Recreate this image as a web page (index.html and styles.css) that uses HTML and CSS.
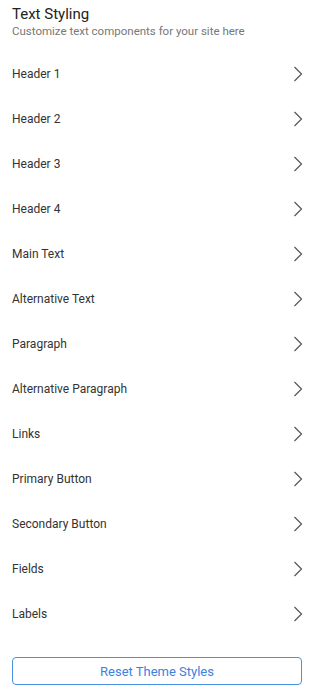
FILE: index.html
```html
<!DOCTYPE html>
<html lang="en">
<head>
    <meta charset="UTF-8">
    <meta name="viewport" content="width=device-width, initial-scale=1.0">
    <title>Text Styling</title>
    <link rel="stylesheet" href="styles.css">
</head>
<body>
    <div class="panel">
        <div class="panel-head">
            <h1>Text Styling</h1>
            <p>Customize text components for your site here</p>
        </div>

        <ul class="style-list">
            <li>Header 1 <svg viewBox="0 0 10 16"><path d="M1.5 1 L8.5 8 L1.5 15"/></svg></li>
            <li>Header 2 <svg viewBox="0 0 10 16"><path d="M1.5 1 L8.5 8 L1.5 15"/></svg></li>
            <li>Header 3 <svg viewBox="0 0 10 16"><path d="M1.5 1 L8.5 8 L1.5 15"/></svg></li>
            <li>Header 4 <svg viewBox="0 0 10 16"><path d="M1.5 1 L8.5 8 L1.5 15"/></svg></li>
            <li>Main Text <svg viewBox="0 0 10 16"><path d="M1.5 1 L8.5 8 L1.5 15"/></svg></li>
            <li>Alternative Text <svg viewBox="0 0 10 16"><path d="M1.5 1 L8.5 8 L1.5 15"/></svg></li>
            <li>Paragraph <svg viewBox="0 0 10 16"><path d="M1.5 1 L8.5 8 L1.5 15"/></svg></li>
            <li>Alternative Paragraph <svg viewBox="0 0 10 16"><path d="M1.5 1 L8.5 8 L1.5 15"/></svg></li>
            <li>Links <svg viewBox="0 0 10 16"><path d="M1.5 1 L8.5 8 L1.5 15"/></svg></li>
            <li>Primary Button <svg viewBox="0 0 10 16"><path d="M1.5 1 L8.5 8 L1.5 15"/></svg></li>
            <li>Secondary Button <svg viewBox="0 0 10 16"><path d="M1.5 1 L8.5 8 L1.5 15"/></svg></li>
            <li>Fields <svg viewBox="0 0 10 16"><path d="M1.5 1 L8.5 8 L1.5 15"/></svg></li>
            <li>Labels <svg viewBox="0 0 10 16"><path d="M1.5 1 L8.5 8 L1.5 15"/></svg></li>
        </ul>

        <button type="button" class="reset-btn">Reset Theme Styles</button>
    </div>
</body>
</html>
```

FILE: styles.css
```css
body {
    font-family: Roboto, "Noto Sans", sans-serif;
    background-color: white;
    margin: 0;
    padding: 0;
}

.panel {
    width: 314px;
    padding: 4px 12px 0 12px;
    box-sizing: border-box;
}

.panel-head h1 {
    margin: 0;
    font-size: 15px;
    font-weight: 400;
    color: #222;
    line-height: 20px;
}

.panel-head p {
    margin: 0;
    font-size: 11.5px;
    color: #777;
    line-height: 15px;
}

.style-list {
    list-style: none;
    margin: 12px 0 0 0;
    padding: 0;
}

.style-list li {
    display: flex;
    justify-content: space-between;
    align-items: center;
    height: 45px;
    font-size: 12px;
    color: #333;
}

.style-list svg {
    width: 10px;
    height: 16px;
    margin-right: -1px;
    fill: none;
    stroke: #555;
    stroke-width: 1.2;
}

.reset-btn {
    display: block;
    width: 290px;
    height: 28px;
    margin: 21px 0 0 0;
    background-color: white;
    border: 1px solid #4a90e2;
    border-radius: 4px;
    color: #3b82e0;
    font-family: inherit;
    font-size: 13px;
    cursor: pointer;
}
```
